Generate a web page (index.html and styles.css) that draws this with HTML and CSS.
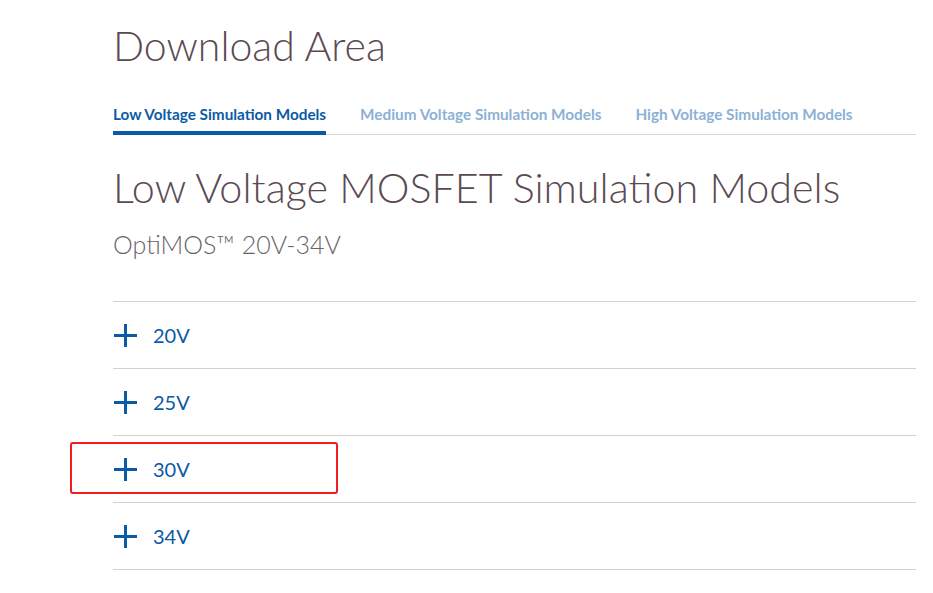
FILE: index.html
```html
<!DOCTYPE html>
<html>
<head>
<meta charset="utf-8">
<link rel="stylesheet" href="styles.css">
</head>
<body>
<main class="page">
  <h1 class="title">Download Area</h1>
  <nav class="tabs">
    <a class="tab active">Low Voltage Simulation Models</a>
    <a class="tab">Medium Voltage Simulation Models</a>
    <a class="tab">High Voltage Simulation Models</a>
  </nav>
  <h2 class="heading">Low Voltage MOSFET Simulation Models</h2>
  <p class="sub">OptiMOS™ 20V-34V</p>
  <ul class="accordion">
    <li class="item"><span class="plus"></span><span class="label">20V</span></li>
    <li class="item"><span class="plus"></span><span class="label">25V</span></li>
    <li class="item marked"><span class="plus"></span><span class="label">30V</span><span class="mark"></span></li>
    <li class="item"><span class="plus"></span><span class="label">34V</span></li>
  </ul>
</main>
</body>
</html>
```
FILE: styles.css
```css
* { box-sizing: border-box; }
html, body { margin: 0; padding: 0; background: #fff; }
body { font-family: "Lato", "Open Sans", sans-serif; }
.page { padding: 0 17px 0 113px; }
.title {
  margin: 0;
  padding-top: 22px;
  font-size: 41px;
  font-weight: 300;
  color: #5b4a54;
  line-height: 48px;
}
.tabs {
  display: flex;
  gap: 34px;
  margin-top: 35px;
  border-bottom: 1px solid #d9d9d9;
}
.tab {
  font-size: 15.3px;
  font-weight: 700;
  color: #8cb1d6;
  padding-bottom: 8px;
  border-bottom: 4px solid transparent;
  margin-bottom: -1px;
}
.tab.active { color: #0a5aa6; border-bottom-color: #0a5aa6; }
.heading {
  margin: 27px 0 0;
  font-size: 41.3px;
  font-weight: 300;
  color: #5b4a54;
  line-height: 50px;
}
.sub {
  margin: 15px 0 0;
  font-size: 25px;
  font-weight: 300;
  color: #6c6468;
  line-height: 34px;
}
.accordion {
  list-style: none;
  margin: 40px 0 0;
  padding: 0;
  border-top: 1px solid #d4d0d2;
}
.item {
  position: relative;
  display: flex;
  align-items: center;
  height: 67px;
  border-bottom: 1px solid #d4d0d2;
}
.plus {
  position: relative;
  width: 23px;
  height: 23px;
  margin-left: 1px;
}
.plus::before, .plus::after {
  content: "";
  position: absolute;
  background: #0a5aa6;
}
.plus::before { left: 0; right: 0; top: 10px; height: 3px; }
.plus::after { top: 0; bottom: 0; left: 10px; width: 3px; }
.label {
  margin-left: 16px;
  font-size: 20px;
  color: #0a5aa6;
}
.mark {
  position: absolute;
  left: -43px;
  top: 6px;
  width: 268px;
  height: 52px;
  border: 2px solid #f01e1e;
  border-radius: 3px;
}
```
